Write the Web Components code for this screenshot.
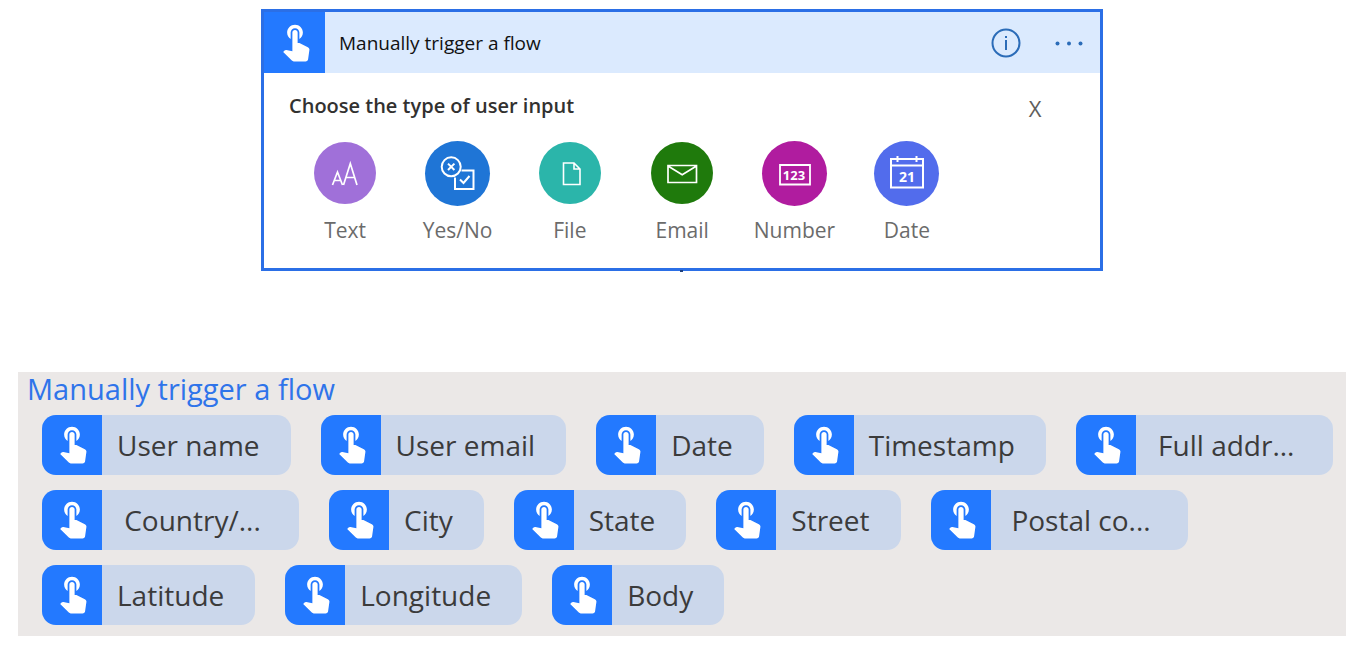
<!DOCTYPE html>
<html lang="en">
<head>
<meta charset="UTF-8">
<meta name="viewport" content="width=device-width, initial-scale=1">
<title>Manually trigger a flow</title>
<style>
  body {
    margin: 0;
    padding: 9px 12px 10px 18px;
    background: #fff;
    font-family: 'Open Sans', 'Noto Sans', sans-serif;
  }
</style>
</head>
<body>
  <trigger-card heading="Manually trigger a flow" prompt="Choose the type of user input">
    <input-type kind="text" color="#a070d9">Text</input-type>
    <input-type kind="yesno" color="#1f75d6" large>Yes/No</input-type>
    <input-type kind="file" color="#2bb5aa">File</input-type>
    <input-type kind="email" color="#1f7a0c">Email</input-type>
    <input-type kind="number" color="#b01c9f" large>Number</input-type>
    <input-type kind="date" color="#526cec" large>Date</input-type>
  </trigger-card>

  <token-panel heading="Manually trigger a flow">
    <token-chip>User name</token-chip>
    <token-chip>User email</token-chip>
    <token-chip>Date</token-chip>
    <token-chip>Timestamp</token-chip>
    <token-chip clipped>Full addr...</token-chip>
    <token-chip clipped>Country/...</token-chip>
    <token-chip>City</token-chip>
    <token-chip>State</token-chip>
    <token-chip>Street</token-chip>
    <token-chip clipped>Postal co...</token-chip>
    <token-chip>Latitude</token-chip>
    <token-chip>Longitude</token-chip>
    <token-chip>Body</token-chip>
  </token-panel>

<script>
/**
 * Glyphs drawn inside the round input type buttons
 */
const TYPE_ICONS = {
  text: `<path d="M20.5 45l5-13 5 13M22.3 40.500h6.400M31.500 45l6.800-21.500L45 45M34 37.500h8.800" stroke-width="1.700"/>`,
  yesno: `<circle cx="27.200" cy="26.800" r="9.500"/><path d="M24 23.600l6.400 6.400M30.400 23.600l-6.400 6.400M37.500 30.500h12v18.500H31V37.500M36 39.500l3.500 3.500 6-7"/>`,
  file: `<path d="M26.500 23h10.500l6 6v15.500H26.500zM37 23v6h6" stroke-width="1.600"/>`,
  email: `<path d="M19 25.500h28.500v17H19zM19 26l14.200 8.700L47.500 26" stroke-width="1.700"/>`,
  number: `<path d="M19 25h30v19.500H19z" stroke-width="1.800"/><text x="33" y="39.500" font-size="13">123</text>`,
  date: `<path d="M17 19h32v28.500H17zM17 25.500h32M23.500 16v6M42.500 16v6"/><text x="33" y="42" font-size="14">21</text>`
};

/**
 * TouchIcon Web Component
 */
class TouchIcon extends HTMLElement {
  constructor() {
    super();
    this.attachShadow({ mode: 'open' });
  }

  connectedCallback() {
    this.shadowRoot.innerHTML = `
      <style>
        :host { display: block; width: 28px; height: 38px; }
        svg { display: block; width: 100%; height: 100%; fill: #fff; }
      </style>
      <svg viewBox="3.5 3 16 21" overflow="visible" aria-hidden="true">
        <path d="M9 11.240V7.500C9 6.120 10.120 5 11.500 5S14 6.120 14 7.500v3.740c1.210-.81 2-2.180 2-3.740C16 5.010 13.990 3 11.500 3S7 5.010 7 7.500c0 1.560.79 2.930 2 3.740z"/>
        <path d="M18.840 15.870l-4.540-2.260c-.17-.07-.35-.11-.54-.11H13v-6c0-.83-.67-1.500-1.500-1.500S10 6.670 10 7.500v10.740l-3.430-.72c-.08-.01-.15-.03-.24-.03-.31 0-.59.13-.79.33l-.79.8 4.940 4.940c.27.27.65.44 1.060.44h6.790c.75 0 1.330-.55 1.440-1.280l.75-5.270c.01-.07.02-.14.02-.2 0-.62-.38-1.160-.91-1.380z"/>
      </svg>
    `;
  }
}

customElements.define('touch-icon', TouchIcon);

/**
 * InputType Web Component
 */
class InputType extends HTMLElement {
  constructor() {
    super();
    this.attachShadow({ mode: 'open' });
  }

  connectedCallback() {
    const kind = this.getAttribute('kind') || 'text';
    const color = this.getAttribute('color') || '#a070d9';

    this.shadowRoot.innerHTML = `
      <style>
        :host { display: block; --size: 62px; }
        :host([large]) { --size: 65px; }
        button {
          display: flex; flex-direction: column; align-items: center;
          width: 100%; padding: 0; border: 0; background: none;
          color: #6b6b6b; font: inherit; font-size: 21px; line-height: 30px;
          cursor: pointer;
        }
        .frame { display: grid; place-items: center; height: 66px; margin-bottom: 9px; }
        .circle {
          display: grid; place-items: center;
          width: var(--size); height: var(--size);
          border-radius: 50%; background: ${color};
        }
        svg { width: 60px; height: 60px; fill: none; stroke: #fff; stroke-width: 2; }
        text {
          fill: #fff; stroke: none; text-anchor: middle;
          font-family: 'Open Sans', sans-serif; font-weight: 700;
        }
      </style>
      <button type="button">
        <span class="frame"><span class="circle">
          <svg viewBox="3 3 60 60" aria-hidden="true">${TYPE_ICONS[kind]}</svg>
        </span></span>
        <span><slot></slot></span>
      </button>
    `;
  }
}

customElements.define('input-type', InputType);

/**
 * TriggerCard Web Component
 */
class TriggerCard extends HTMLElement {
  constructor() {
    super();
    this.attachShadow({ mode: 'open' });
  }

  connectedCallback() {
    const heading = this.getAttribute('heading') || '';
    const prompt = this.getAttribute('prompt') || '';

    this.shadowRoot.innerHTML = `
      <style>
        :host {
          display: block; position: relative; box-sizing: border-box;
          max-width: 842px; margin: 0 auto;
          border: 3px solid #2b6fe6; background: #fff;
        }
        /* start of the connector line to the next step */
        :host::after {
          content: ''; position: absolute; left: 50%; bottom: -4px;
          width: 3px; height: 2px; margin-left: -2px; background: #1d3f7c;
        }
        header { display: flex; align-items: center; background: #dbeafe; }
        .badge {
          display: grid; place-items: center;
          width: 61px; height: 61px; background: #2379ff;
        }
        h1 { flex: 1; margin: 0; padding-left: 14px; font-size: 19px; font-weight: 400; line-height: 28px; color: #111; }
        button { padding: 0; border: 0; background: none; font: inherit; cursor: pointer; }
        header button { display: flex; color: #2b6cb8; }
        .info { margin-right: 33px; }
        .more { margin-right: 16px; }
        .prompt { display: flex; align-items: flex-start; padding: 17px 50px 0 25px; }
        h2 { flex: 1; margin: 0; font-size: 20px; font-weight: 600; line-height: 32px; color: #323130; }
        .close { width: 30px; font-size: 22px; line-height: 36px; color: #605e5c; }
        .types {
          display: grid; grid-template-columns: repeat(6, 1fr);
          max-width: 674px; padding: 14px 25px 23px;
        }
      </style>
      <header>
        <span class="badge"><touch-icon></touch-icon></span>
        <h1>${heading}</h1>
        <button type="button" class="info" aria-label="Information">
          <svg width="30" height="30" viewBox="0 0 30 30" fill="none" stroke="currentColor" aria-hidden="true">
            <circle cx="15" cy="15" r="13.500" stroke-width="2"/>
            <path d="M15 12v10M15 8v2" stroke-width="2"/>
          </svg>
        </button>
        <button type="button" class="more" aria-label="More commands">
          <svg width="30" height="30" viewBox="0 0 30 30" fill="currentColor" aria-hidden="true">
            <circle cx="3.500" cy="15.500" r="2"/><circle cx="15" cy="15.500" r="2"/><circle cx="26.500" cy="15.500" r="2"/>
          </svg>
        </button>
      </header>
      <div class="prompt">
        <h2>${prompt}</h2>
        <button type="button" class="close">X</button>
      </div>
      <div class="types"><slot></slot></div>
    `;
  }
}

customElements.define('trigger-card', TriggerCard);

/**
 * TokenChip Web Component
 */
class TokenChip extends HTMLElement {
  constructor() {
    super();
    this.attachShadow({ mode: 'open' });
  }

  connectedCallback() {
    this.shadowRoot.innerHTML = `
      <style>
        :host { display: block; }
        button {
          display: flex; align-items: center; overflow: hidden;
          height: 60px; padding: 0; border: 0; border-radius: 14px;
          background: #cbd7eb; color: #3b3b3b;
          font: inherit; font-size: 28px; line-height: 40px; cursor: pointer;
        }
        .badge {
          display: grid; place-items: center;
          width: 60px; height: 60px; background: #2379ff;
        }
        .label { padding: 0 31px 0 15px; text-align: center; white-space: nowrap; }
        :host([clipped]) .label { min-width: 151px; }
      </style>
      <button type="button">
        <span class="badge"><touch-icon></touch-icon></span>
        <span class="label"><slot></slot></span>
      </button>
    `;
  }
}

customElements.define('token-chip', TokenChip);

/**
 * TokenPanel Web Component
 */
class TokenPanel extends HTMLElement {
  constructor() {
    super();
    this.attachShadow({ mode: 'open' });
  }

  connectedCallback() {
    const heading = this.getAttribute('heading') || '';

    this.shadowRoot.innerHTML = `
      <style>
        :host { display: block; margin-top: 101px; padding-bottom: 11px; background: #ebe8e7; }
        h2 { margin: 0; padding: 0 9px 9px; font-size: 29px; font-weight: 400; line-height: 34px; color: #2f74ea; }
        .chips { display: flex; flex-wrap: wrap; gap: 15px 30px; padding: 0 8px 0 24px; }
      </style>
      <h2>${heading}</h2>
      <div class="chips"><slot></slot></div>
    `;
  }
}

customElements.define('token-panel', TokenPanel);
</script>
</body>
</html>
